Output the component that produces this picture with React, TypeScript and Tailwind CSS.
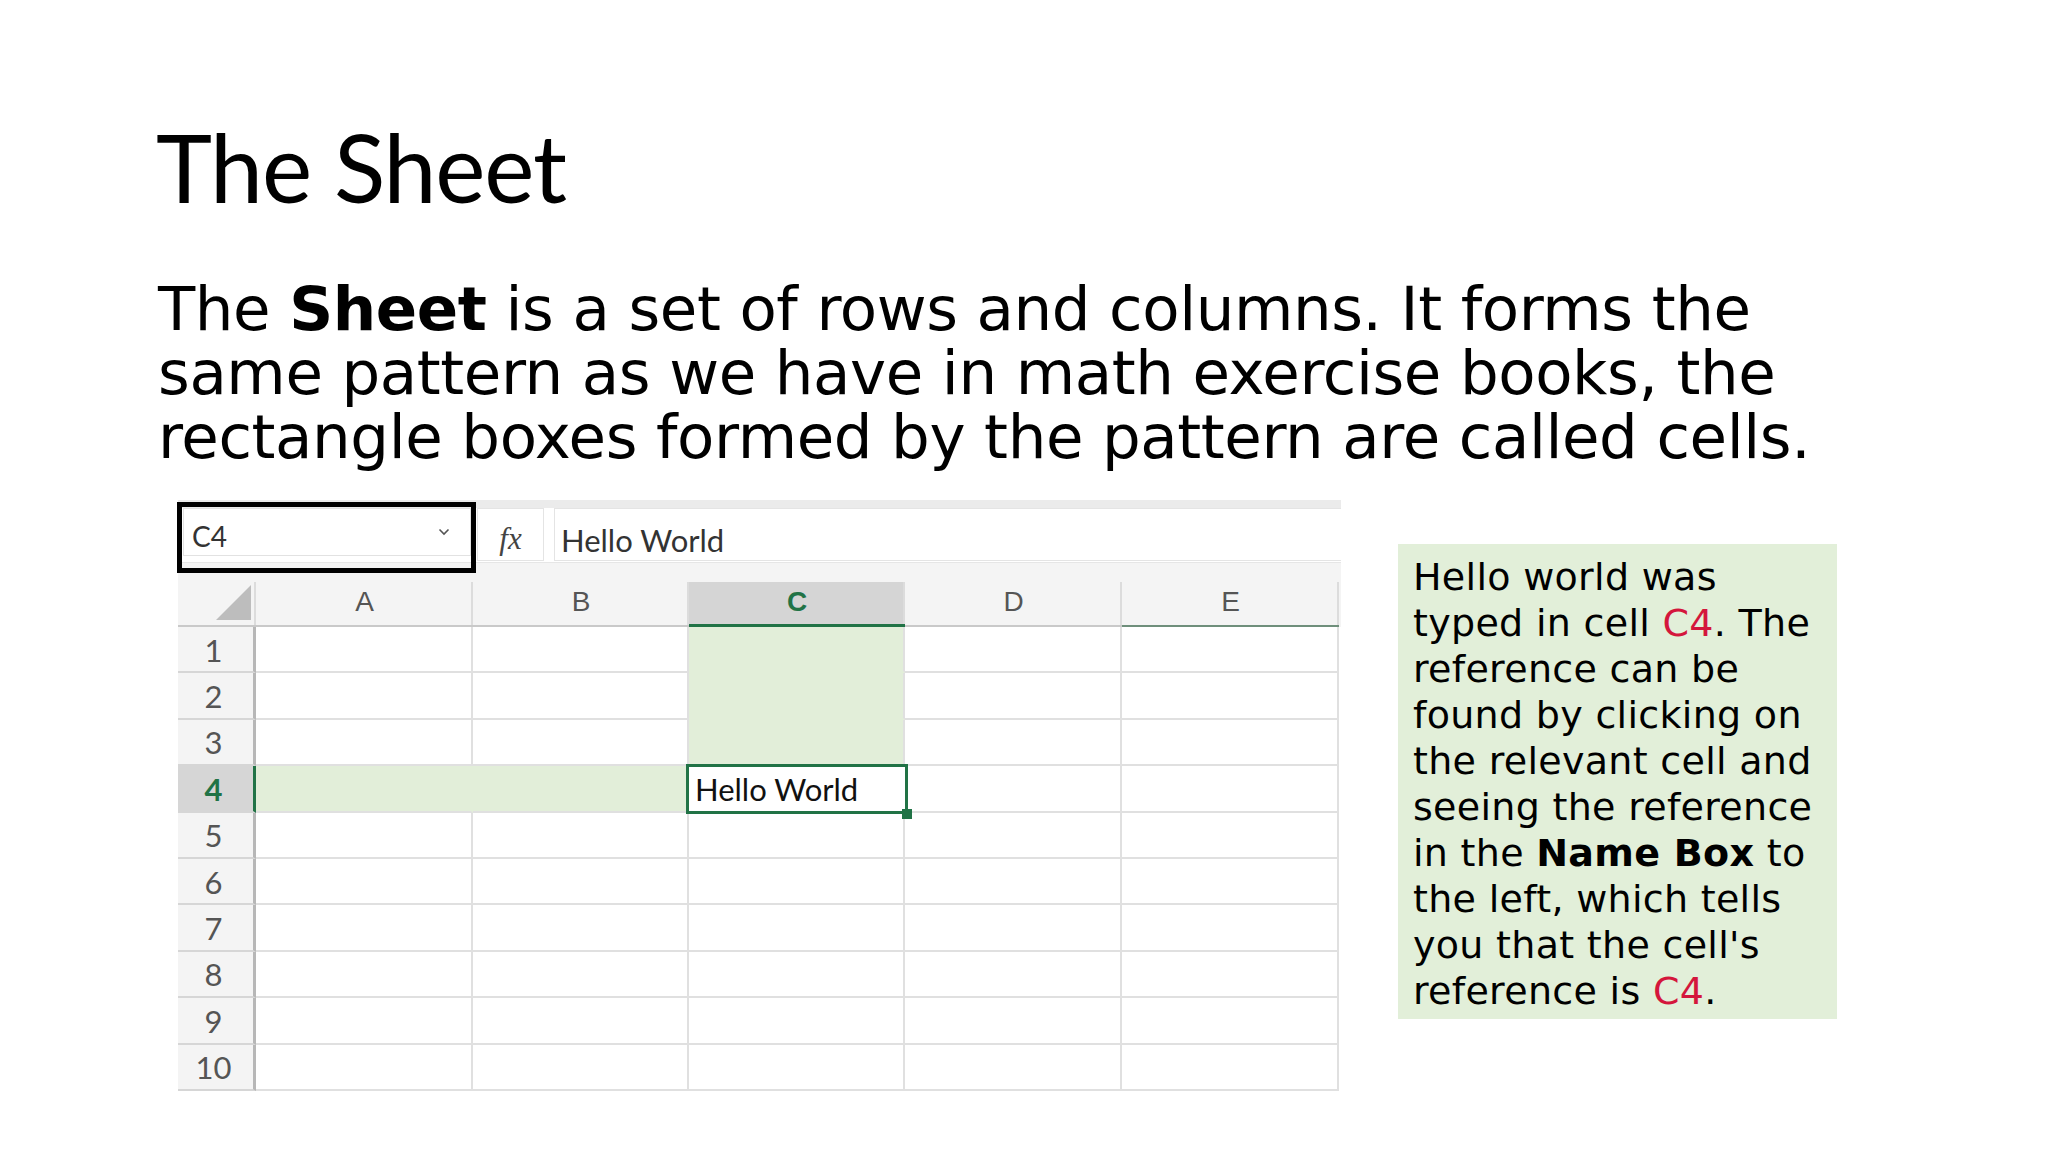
import React from "react";

function ColHeader({ label, active, last }: { label: string; active?: boolean; last?: boolean }) {
  return (
    <div
      className={
        "relative flex items-center justify-center h-[45px] " +
        (active ? "bg-[#d5d5d5] border-b-[3px] border-[#217346]" : last ? "border-b-[2px] border-[#6f8f7b]" : "border-b-[2px] border-[#c9c9c9]")
      }
    >
      <span
        className={
          "text-[28px] leading-none mt-[-3px] " +
          (active ? "font-bold text-[#217346]" : "text-[#555555]")
        }
        style={{ fontFamily: '"Liberation Sans", Arial, sans-serif' }}
      >
        {label}
      </span>
      <div className="absolute right-0 top-0 bottom-0 w-[2px] bg-[#dcdcdc]" />
    </div>
  );
}

export default function App() {
  const rows = [1, 2, 3, 4, 5, 6, 7, 8, 9, 10];
  const cols = ["A", "B", "C", "D", "E"];
  return (
    <div className="w-[2048px] h-[1152px] bg-white overflow-hidden">
      <div className="pl-[156px] pt-[119px]">
        <h1
          className="text-[95px] leading-none text-black font-normal tracking-[-1.2px]"
          style={{ fontFamily: 'Lato, "Noto Sans", sans-serif' }}
        >
          The Sheet
        </h1>
        <p
          className="mt-[63px] ml-[2px] text-[61px] leading-[64px] text-black whitespace-nowrap tracking-[-0.4px]"
          style={{ fontFamily: '"DejaVu Sans", Verdana, sans-serif' }}
        >
          The <b className="font-bold">Sheet</b> is a set of rows and columns. It forms the
          <br />
          same pattern as we have in math exercise books, the
          <br />
          rectangle boxes formed by the pattern are called cells.
        </p>

        <div className="mt-[31px] ml-[22px] flex items-start">
          {/* Spreadsheet */}
          <div className="w-[1163px]" style={{ fontFamily: 'Lato, "Noto Sans", sans-serif' }}>
            <div className="h-[8px] bg-[#ebebeb]" />
            {/* formula bar */}
            <div className="flex h-[54px] bg-white">
              <div className="relative w-[298px] h-full">
                <div className="absolute inset-x-[5px] top-[0px] bottom-[6px] border border-[#e2e2e2] bg-white flex items-center justify-between pl-[8px] pr-[20px]">
                  <span className="text-[28px] leading-none text-[#333] mt-[8px]">C4</span>
                  <svg width="12" height="8" viewBox="0 0 12 8">
                    <polyline points="1.5,1.5 6,6 10.5,1.5" fill="none" stroke="#555" strokeWidth="1.6" />
                  </svg>
                </div>
                <div className="absolute left-[-1px] right-0 top-[-6px] bottom-[-11px] border-[5px] border-black z-10" />
              </div>
              <div className="ml-[1px] w-[67px] h-[53px] border border-[#e4e4e4] flex items-center justify-center">
                <span
                  className="italic text-[31px] leading-none text-[#444] mt-[7px]"
                  style={{ fontFamily: '"Liberation Serif", "Times New Roman", serif' }}
                >
                  fx
                </span>
              </div>
              <div className="ml-[10px] flex-1 h-[53px] border border-[#e4e4e4] border-r-0 flex items-center pl-[6px]">
                <span className="text-[31px] leading-none text-[#333] mt-[11px]">Hello World</span>
              </div>
            </div>
            {/* column headers */}
            <div className="bg-[#f4f4f4] border-t border-[#e6e6e6]">
              <div className="h-[19px]" />
              <div className="grid grid-cols-[78px_217px_216px_216px_217px_217px]">
                <div className="relative h-[45px] border-b-[2px] border-[#c9c9c9]">
                  <svg className="absolute right-[5px] bottom-[5px]" width="35" height="35" viewBox="0 0 35 35">
                    <polygon points="35,0 35,35 0,35" fill="#bdbdbd" />
                  </svg>
                  <div className="absolute right-0 top-0 bottom-0 w-[2px] bg-[#dcdcdc]" />
                </div>
                {cols.map((c, i) => (
                  <ColHeader key={c} label={c} active={c === "C"} last={i === 4} />
                ))}
              </div>
            </div>
            {/* grid rows */}
            {rows.map((r) => {
              const isActiveRow = r === 4;
              return (
                <div key={r} className="grid grid-cols-[78px_217px_216px_216px_217px_217px] h-[46.4px]">
                  <div
                    className={
                      "flex items-center justify-center border-b-[2px] border-[#d6d6d6] " +
                      (isActiveRow
                        ? "bg-[#d6d6d6] border-r-[3px] border-r-[#217346]"
                        : "bg-[#f4f4f4] border-r-[3px] border-r-[#b7b7b7]")
                    }
                  >
                    <span
                      className={
                        "text-[31px] leading-none mt-[2px] mr-[4px] " +
                        (isActiveRow ? "font-bold text-[#217346]" : "text-[#555555]")
                      }
                    >
                      {r}
                    </span>
                  </div>
                  {cols.map((c) => {
                    const green = (isActiveRow && (c === "A" || c === "B")) || (c === "C" && r < 4);
                    const active = isActiveRow && c === "C";
                    return (
                      <div
                        key={c}
                        className={
                          "relative border-b-[2px] border-r-[2px] border-[#e0e0e0] " +
                          (green ? "bg-[#e2eed9] " : "bg-white ") +
                          (c === "B" && isActiveRow ? "border-r-[#e2eed9] " : "") +
                          (c === "C" && r < 4 ? "border-b-[#e2eed9] " : "") +
                          (c === "A" && isActiveRow ? "border-r-[#e2eed9] " : "")
                        }
                      >
                        {active && (
                          <>
                            <div className="absolute left-[-3px] right-[-5px] top-[-2px] bottom-[-3px] border-[3px] border-[#217346] z-10 flex items-center pl-[6px] bg-white">
                              <span className="text-[31px] leading-none text-[#111] mt-[2px]">Hello World</span>
                            </div>
                            <div className="absolute right-[-9px] bottom-[-8px] w-[10px] h-[10px] bg-[#217346] z-20" />
                          </>
                        )}
                      </div>
                    );
                  })}
                </div>
              );
            })}
          </div>

          {/* Right note box */}
          <div
            className="ml-[57px] mt-[44px] w-[439px] h-[475px] bg-[#e2efd9] pl-[15px] pt-[10px] text-[38px] leading-[46px] tracking-[0.3px] text-black whitespace-nowrap"
            style={{ fontFamily: '"DejaVu Sans", Verdana, sans-serif' }}
          >
            Hello world was
            <br />
            typed in cell <span className="text-[#d4163c]">C4</span>. The
            <br />
            reference can be
            <br />
            found by clicking on
            <br />
            the relevant cell and
            <br />
            seeing the reference
            <br />
            in the <b className="font-bold">Name Box</b> to
            <br />
            the left, which tells
            <br />
            you that the cell's
            <br />
            reference is <span className="text-[#d4163c]">C4</span>.
          </div>
        </div>
      </div>
    </div>
  );
}
